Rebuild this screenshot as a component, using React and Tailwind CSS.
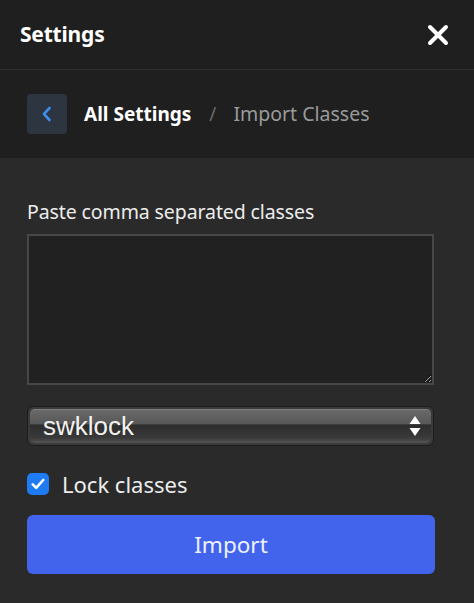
import React, { useState } from 'react';

export default function App() {
  const [lock, setLock] = useState(true);
  const [text, setText] = useState('');

  return (
    <div className="w-[474px] h-[603px] bg-[#2a2a2a] text-white font-['Noto_Sans',sans-serif] flex flex-col overflow-hidden">
      {/* Header */}
      <div className="h-[70px] shrink-0 bg-[#1f1f1f] border-b border-[#2f2f2f] flex items-center justify-between pl-5 pr-6">
        <h1 className="text-[21px] font-bold tracking-[-0.2px] text-white">Settings</h1>
        <button className="w-6 h-6 flex items-center justify-center text-white">
          <svg width="22" height="22" viewBox="0 0 22 22">
            <path d="M3 3 L19 19 M19 3 L3 19" stroke="currentColor" strokeWidth="4" strokeLinecap="round" />
          </svg>
        </button>
      </div>

      {/* Breadcrumb */}
      <div className="h-[88px] shrink-0 bg-[#1f1f1f] flex items-center pl-[27px]">
        <button className="w-10 h-10 rounded-[4px] bg-[#2d3540] flex items-center justify-center">
          <svg width="16" height="18" viewBox="0 0 16 18">
            <path d="M10.5 3 L5 9 L10.5 15" fill="none" stroke="#3d8cf0" strokeWidth="2.6" strokeLinecap="round" strokeLinejoin="round" />
          </svg>
        </button>
        <span className="ml-[17px] text-[19px] font-bold text-white">All Settings</span>
        <span className="ml-[18px] text-[19px] text-[#6a6a6a]">/</span>
        <span className="ml-[17px] text-[19.5px] text-[#9a9a9a]">Import Classes</span>
      </div>

      {/* Body */}
      <div className="flex-1 px-[27px] pt-[40px] flex flex-col">
        <label className="text-[19.5px] text-[#ececec] leading-[28px] tracking-[-0.1px]">Paste comma separated classes</label>
        <textarea
          value={text}
          onChange={(e) => setText(e.target.value)}
          className="mt-[8px] w-[407px] h-[151px] bg-[#212121] border-2 border-[#474747] outline-none resize-y text-white p-1"
        />

        <div className="mt-[21px] w-[407px] h-[40px] rounded-[6px] border border-[#1c1c1c] bg-[#3a3a3a] p-[2px]">
          <div className="relative h-full rounded-[5px] bg-[linear-gradient(to_bottom,#6a6a6a_0%,#575757_45%,#2c2c2c_46%,#3a3a3a_85%,#555_100%)] shadow-[inset_0_1px_0_rgba(255,255,255,0.15)] flex items-center">
            <span className="ml-[13px] text-[26px] text-[#f2f2f2] font-['Liberation_Sans',Arial,sans-serif] leading-none">swklock</span>
            <svg className="absolute right-[10px] top-1/2 -translate-y-1/2" width="12" height="24" viewBox="0 0 12 24">
              <path d="M6 2 L11.5 10 L0.5 10 Z" fill="#ffffff" />
              <path d="M0.5 14 L11.5 14 L6 22 Z" fill="#ffffff" />
            </svg>
          </div>
        </div>

        <label className="mt-[27px] h-[22px] flex items-center gap-[13px] cursor-pointer">
          <span
            onClick={() => setLock(!lock)}
            className={`w-[22px] h-[22px] rounded-[5px] flex items-center justify-center ${lock ? 'bg-[#1e7bf2]' : 'bg-white'}`}
          >
            {lock && (
              <svg width="14" height="12" viewBox="0 0 14 12">
                <path d="M1.8 6.4 L5.2 9.8 L12.2 2" fill="none" stroke="#fff" strokeWidth="2.6" strokeLinecap="round" strokeLinejoin="round" />
              </svg>
            )}
          </span>
          <span className="text-[22px] leading-none text-[#ececec]">Lock classes</span>
        </label>

        <button className="mt-[20px] w-[408px] h-[59px] rounded-[6px] bg-[#4263eb] text-[#eef1ff] text-[22.5px] flex items-center justify-center">
          Import
        </button>
      </div>
    </div>
  );
}
